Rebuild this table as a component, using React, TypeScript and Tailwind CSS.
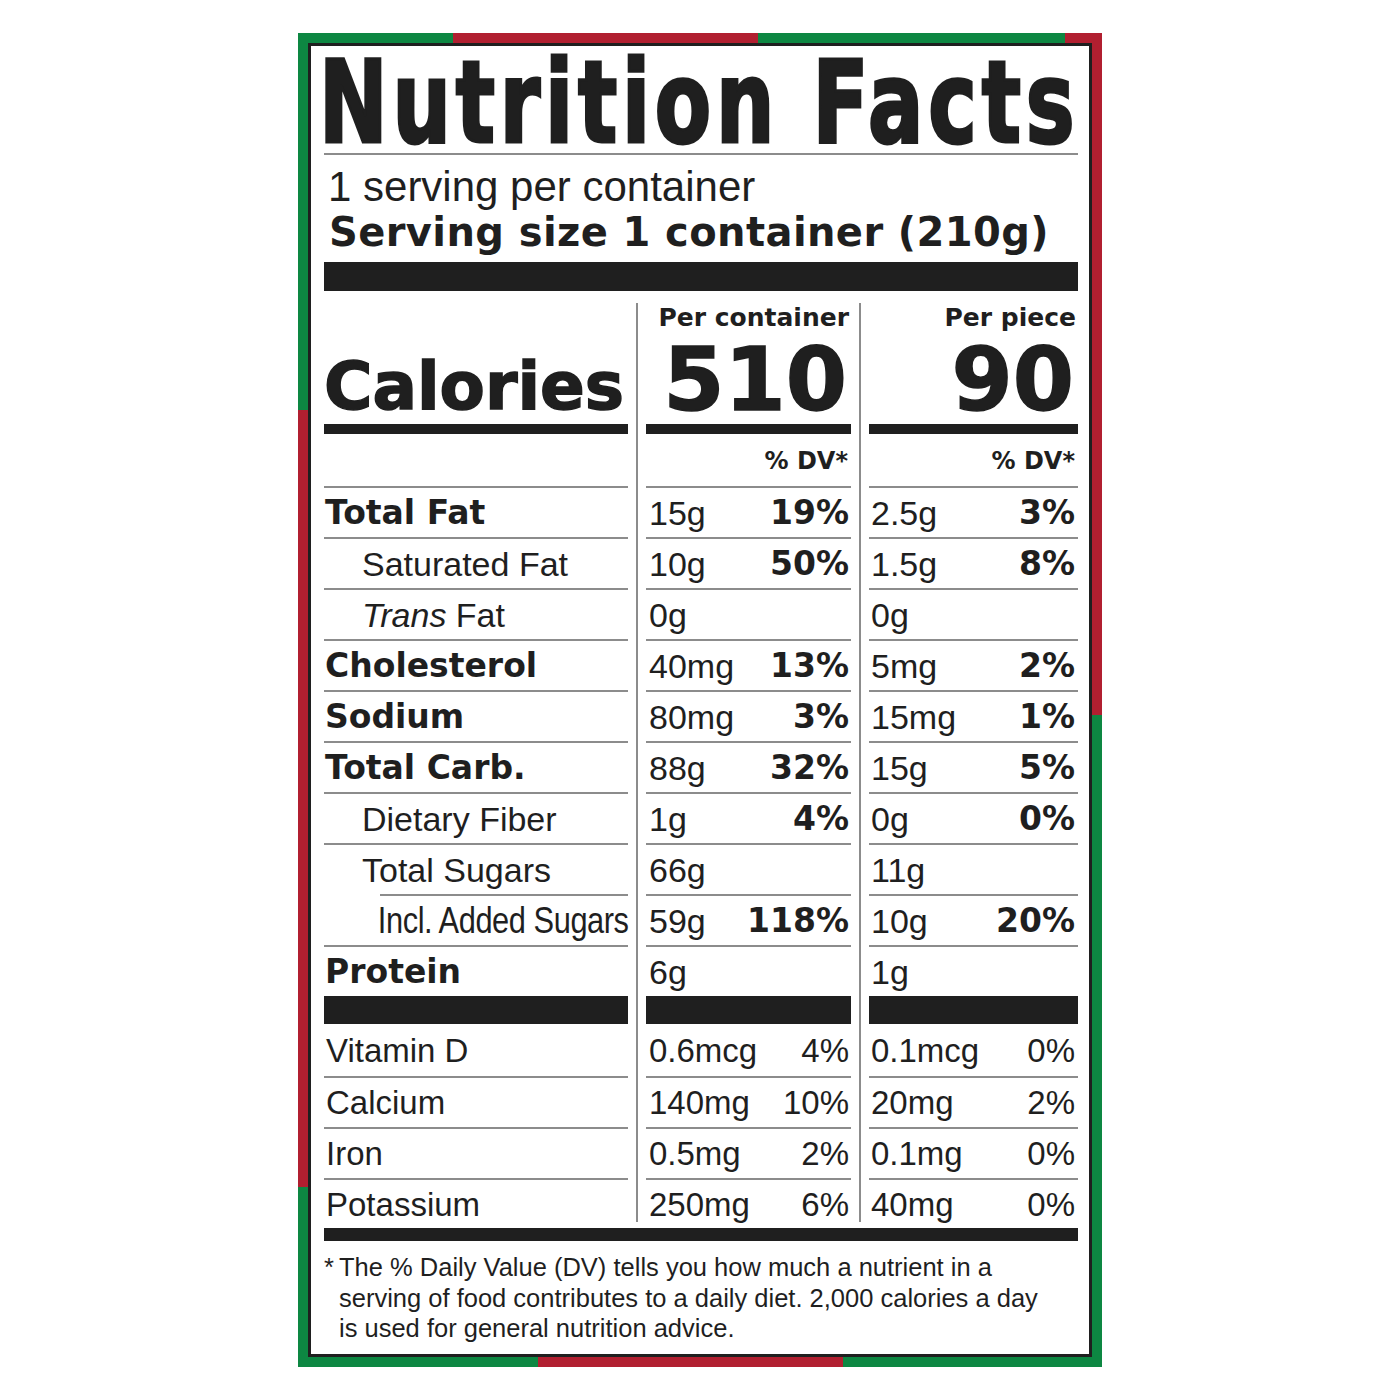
import React from 'react';

const reg = "font-['Liberation_Sans',Arial,sans-serif]";
const heavy = "font-['DejaVu_Sans','Liberation_Sans',sans-serif] font-bold";

type Style = 'bold' | 'sub' | 'added';

interface Nutrient {
  label: React.ReactNode;
  style: Style;
  c: [string, string];
  p: [string, string];
  indentLine?: boolean;
}

const nutrients: Nutrient[] = [
  { label: 'Total Fat', style: 'bold', c: ['15g', '19%'], p: ['2.5g', '3%'] },
  { label: 'Saturated Fat', style: 'sub', c: ['10g', '50%'], p: ['1.5g', '8%'] },
  { label: <><i>Trans</i> Fat</>, style: 'sub', c: ['0g', ''], p: ['0g', ''] },
  { label: 'Cholesterol', style: 'bold', c: ['40mg', '13%'], p: ['5mg', '2%'] },
  { label: 'Sodium', style: 'bold', c: ['80mg', '3%'], p: ['15mg', '1%'] },
  { label: 'Total Carb.', style: 'bold', c: ['88g', '32%'], p: ['15g', '5%'] },
  { label: 'Dietary Fiber', style: 'sub', c: ['1g', '4%'], p: ['0g', '0%'] },
  { label: 'Total Sugars', style: 'sub', c: ['66g', ''], p: ['11g', ''], indentLine: true },
  { label: 'Incl. Added Sugars', style: 'added', c: ['59g', '118%'], p: ['10g', '20%'] },
  { label: 'Protein', style: 'bold', c: ['6g', ''], p: ['1g', ''] },
];

const vitamins: { label: string; c: [string, string]; p: [string, string]; h: string }[] = [
  { label: 'Vitamin D', c: ['0.6mcg', '4%'], p: ['0.1mcg', '0%'], h: 'h-[52px]' },
  { label: 'Calcium', c: ['140mg', '10%'], p: ['20mg', '2%'], h: 'h-[49px]' },
  { label: 'Iron', c: ['0.5mg', '2%'], p: ['0.1mg', '0%'], h: 'h-[49px]' },
  { label: 'Potassium', c: ['250mg', '6%'], p: ['40mg', '0%'], h: 'h-[48px]' },
];

const Line = ({ indent }: { indent?: boolean }) => (
  <div className={indent ? 'ml-[56px] h-[2px] bg-[#8c8c8c]' : 'h-[2px] bg-[#8c8c8c]'} />
);

const Bar = ({ h }: { h: string }) => <div className={`${h} bg-[#1f1f1f]`} />;

const labelClass = (s: Style) => {
  if (s === 'bold') return `${heavy} text-[33px] pl-[1px]`;
  if (s === 'sub') return `${reg} text-[34px] pl-[38px]`;
  return `${reg} text-[36px] pl-[63px] tracking-[-0.5px] origin-left scale-x-[0.855] whitespace-nowrap`;
};

function LabelColumn() {
  return (
    <div className="flex w-[304px] flex-col">
      <div className="flex h-[121px] items-end pb-[4px]">
        <span className={`${heavy} text-[66px] leading-none [-webkit-text-stroke:1.5px_#1f1f1f]`}>Calories</span>
      </div>
      <Bar h="h-[10px]" />
      <div className="h-[52px]" />
      <Line />
      {nutrients.map((n, i) => (
        <React.Fragment key={i}>
          <div className="flex h-[49px] items-center">
            <span className={`${labelClass(n.style)} leading-none`}>{n.label}</span>
          </div>
          {i < nutrients.length - 1 && <Line indent={n.indentLine} />}
        </React.Fragment>
      ))}
      <Bar h="h-[28px]" />
      {vitamins.map((v, i) => (
        <React.Fragment key={v.label}>
          <div className={`flex ${v.h} items-center pl-[2px]`}>
            <span className={`${reg} text-[33px] leading-none`}>{v.label}</span>
          </div>
          {i < vitamins.length - 1 && <Line />}
        </React.Fragment>
      ))}
    </div>
  );
}

function ValueColumn({ width, head, cal, which, pl, pr }: { width: string; head: string; cal: string; which: 'c' | 'p'; pl: string; pr: string }) {
  return (
    <div className={`flex ${width} flex-col`}>
      <div className="flex h-[121px] flex-col items-end justify-between">
        <span className={`${heavy} pt-[2px] pr-[2px] text-[25px] leading-none`}>{head}</span>
        <span className={`${heavy} pr-[4px] text-[88px] leading-none [-webkit-text-stroke:1.5px_#1f1f1f]`}>{cal}</span>
      </div>
      <Bar h="h-[10px]" />
      <div className="flex h-[52px] items-start justify-end pt-[15px] pr-[3px]">
        <span className={`${heavy} text-[24px] leading-none`}>% DV*</span>
      </div>
      <Line />
      {nutrients.map((n, i) => (
        <React.Fragment key={i}>
          <div className={`flex h-[49px] items-center justify-between ${pl} ${pr}`}>
            <span className={`${reg} text-[34px] leading-none`}>{n[which][0]}</span>
            <span className={`${heavy} text-[33px] leading-none`}>{n[which][1]}</span>
          </div>
          {i < nutrients.length - 1 && <Line />}
        </React.Fragment>
      ))}
      <Bar h="h-[28px]" />
      {vitamins.map((v, i) => (
        <React.Fragment key={v.label}>
          <div className={`flex ${v.h} items-center justify-between ${pl} ${pr}`}>
            <span className={`${reg} text-[33px] leading-none`}>{v[which][0]}</span>
            <span className={`${reg} text-[33px] leading-none`}>{v[which][1]}</span>
          </div>
          {i < vitamins.length - 1 && <Line />}
        </React.Fragment>
      ))}
    </div>
  );
}

const Divider = () => (
  <div className="flex w-[18px] justify-center pb-[6px]">
    <div className="w-[2px] bg-[#8c8c8c]" />
  </div>
);

export default function App() {
  return (
    <div className="min-h-[1400px] bg-white pt-[33px] text-[#1f1f1f]">
      <div className="relative mx-auto h-[1334px] w-[804px] p-[10px]">
        {/* decorative stripe frame */}
        <div className="absolute left-0 top-0 h-[10px] w-[155px] bg-[#0d8742]" />
        <div className="absolute left-[155px] top-0 h-[10px] w-[305px] bg-[#b11f30]" />
        <div className="absolute left-[460px] top-0 h-[10px] w-[307px] bg-[#0d8742]" />
        <div className="absolute left-[767px] top-0 h-[10px] w-[37px] bg-[#b11f30]" />
        <div className="absolute bottom-0 left-0 h-[11px] w-[240px] bg-[#0d8742]" />
        <div className="absolute bottom-0 left-[240px] h-[11px] w-[305px] bg-[#b11f30]" />
        <div className="absolute bottom-0 left-[545px] h-[11px] w-[259px] bg-[#0d8742]" />
        <div className="absolute left-0 top-0 h-[377px] w-[10px] bg-[#0d8742]" />
        <div className="absolute left-0 top-[377px] h-[777px] w-[10px] bg-[#b11f30]" />
        <div className="absolute left-0 top-[1154px] h-[180px] w-[10px] bg-[#0d8742]" />
        <div className="absolute right-0 top-0 h-[682px] w-[10px] bg-[#b11f30]" />
        <div className="absolute right-0 top-[682px] h-[652px] w-[10px] bg-[#0d8742]" />

        <div className="relative flex h-full flex-col border-[3px] border-[#1f1f1f] bg-white pl-[13px] pr-[11px]">
          <div className="h-[107px]">
            <div className="-ml-[5px] origin-left scale-x-[0.8] whitespace-nowrap font-['DejaVu_Sans',sans-serif] text-[114px] font-bold font-stretch-condensed leading-none tracking-[6px] [-webkit-text-stroke:3px_#1f1f1f]">
              Nutrition Facts
            </div>
          </div>
          <Line />
          <div className={`${reg} mt-[11px] pl-[4px] text-[42px] leading-none`}>1 serving per container</div>
          <div className={`${heavy} mt-[4px] pl-[5px] text-[40px] leading-none tracking-[0.4px]`}>Serving size 1 container (210g)</div>
          <div className="mt-[10px]">
            <Bar h="h-[29px]" />
          </div>

          <div className="mt-[12px] flex">
            <LabelColumn />
            <Divider />
            <ValueColumn width="w-[205px]" head="Per container" cal="510" which="c" pl="pl-[3px]" pr="pr-[2px]" />
            <Divider />
            <ValueColumn width="w-[209px]" head="Per piece" cal="90" which="p" pl="pl-[2px]" pr="pr-[3px]" />
          </div>
          <Bar h="h-[13px]" />

          <div className={`${reg} mt-[11px] flex text-[25.5px] leading-[30.5px]`}>
            <span className="w-[15px]">*</span>
            <p>
              The % Daily Value (DV) tells you how much a nutrient in a<br />
              serving of food contributes to a daily diet. 2,000 calories a day<br />
              is used for general nutrition advice.
            </p>
          </div>
        </div>
      </div>
    </div>
  );
}
